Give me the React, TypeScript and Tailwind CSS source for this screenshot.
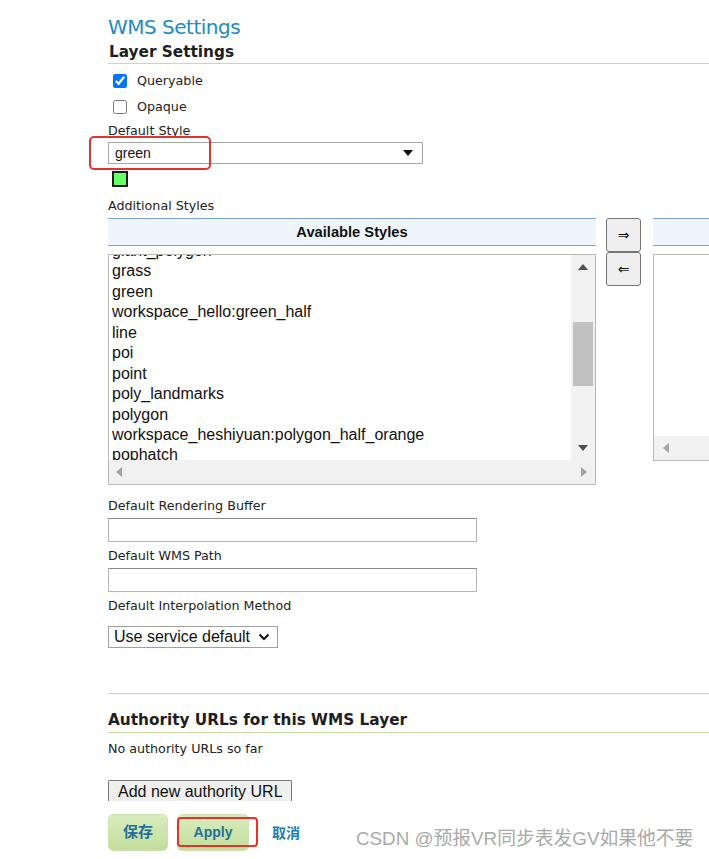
import React from "react";

const items = [
  "giant_polygon",
  "grass",
  "green",
  "workspace_hello:green_half",
  "line",
  "poi",
  "point",
  "poly_landmarks",
  "polygon",
  "workspace_heshiyuan:polygon_half_orange",
  "pophatch",
  "population",
];

function TriUp({ color = "#505050" }: { color?: string }) {
  return (
    <svg width="10" height="6" viewBox="0 0 10 6">
      <path d="M0 6 L5 0 L10 6 Z" fill={color} />
    </svg>
  );
}
function TriDown({ color = "#505050" }: { color?: string }) {
  return (
    <svg width="10" height="6" viewBox="0 0 10 6">
      <path d="M0 0 L10 0 L5 6 Z" fill={color} />
    </svg>
  );
}
function TriLeft({ color = "#a3a3a3" }: { color?: string }) {
  return (
    <svg width="6" height="10" viewBox="0 0 6 10">
      <path d="M6 0 L6 10 L0 5 Z" fill={color} />
    </svg>
  );
}
function TriRight({ color = "#a3a3a3" }: { color?: string }) {
  return (
    <svg width="6" height="10" viewBox="0 0 6 10">
      <path d="M0 0 L6 5 L0 10 Z" fill={color} />
    </svg>
  );
}

export default function App() {
  return (
    <div className="relative w-[709px] h-[859px] overflow-hidden bg-white text-[#222] font-['DejaVu_Sans',sans-serif] text-[12.7px]">
      <div className="pl-[108px] pt-[14px]">
        <h1 className="h-[28px] leading-[27px] text-[20px] tracking-[-0.5px] text-[#1d8bc5]">WMS Settings</h1>
        <h2 className="h-[22px] leading-[20px] pl-px text-[15.3px] font-bold text-[#1e1e1e] border-b border-[#c4de9f]">
          Layer Settings
        </h2>

        <div className="mt-[4px] flex items-center h-[26px] pl-[5px] gap-[10px]">
          <input type="checkbox" defaultChecked className="m-0 w-[14px] h-[14px]" />
          <span>Queryable</span>
        </div>
        <div className="flex items-center h-[26px] pl-[5px] gap-[10px]">
          <input type="checkbox" className="m-0 w-[14px] h-[14px]" />
          <span>Opaque</span>
        </div>

        <div className="mt-[3px] h-[16px] leading-[16px]">Default Style</div>
        <div className="mt-[3px] h-[22px] w-[315px] border border-[#a6a6a6] flex items-center justify-between pl-[6px] pr-[9px] font-['Liberation_Sans',sans-serif] text-[14px] text-[#111]">
          <span>green</span>
          <TriDown color="#111" />
        </div>
        <div className="mt-[7px] ml-[4px] w-[16px] h-[16px] border-2 border-[#1a1a1a] bg-[#66ff66]" />

        <div className="mt-[11px] h-[16px] leading-[16px]">Additional Styles</div>

        <div className="mt-[4px] flex items-start">
          {/* left column */}
          <div className="w-[488px] shrink-0">
            <div className="h-[28px] border-y border-[#7ca3d6] bg-[#eef5fd] flex items-center justify-center font-['Liberation_Sans',sans-serif] font-bold text-[14.7px] text-[#111]">
              Available Styles
            </div>
            <div className="mt-[8px] h-[231px] border border-[#b9b9b9] flex flex-col">
              <div className="flex-1 flex min-h-0">
                <div className="flex-1 overflow-hidden">
                  <div className="-mt-[14px] font-['Liberation_Sans',sans-serif] text-[16px] text-[#111]">
                    {items.map((it) => (
                      <div key={it} className="h-[20.44px] leading-[20.44px] pl-[3px] whitespace-nowrap">
                        {it}
                      </div>
                    ))}
                  </div>
                </div>
                <div className="w-[24px] bg-[#f1f1f1] flex flex-col">
                  <div className="h-[24px] flex items-center justify-center">
                    <TriUp />
                  </div>
                  <div className="flex-1 relative">
                    <div className="mt-[43px] mx-[2px] h-[64px] bg-[#c1c1c1]" />
                  </div>
                  <div className="h-[24px] flex items-center justify-center">
                    <TriDown />
                  </div>
                </div>
              </div>
              <div className="h-[24px] bg-[#f1f1f1] flex items-center justify-between pl-[7px] pr-[8px]">
                <TriLeft />
                <TriRight />
              </div>
            </div>
          </div>

          {/* middle buttons */}
          <div className="ml-[10px] shrink-0 flex flex-col">
            <button className="w-[35px] h-[34px] border border-[#767676] rounded-[3px] bg-[#efefef] text-[14px] text-[#111] flex items-center justify-center">
              ⇒
            </button>
            <button className="w-[35px] h-[34px] border border-[#767676] rounded-[3px] bg-[#efefef] text-[14px] text-[#111] flex items-center justify-center">
              ⇐
            </button>
          </div>

          {/* right column */}
          <div className="ml-[12px] w-[200px] shrink-0">
            <div className="h-[28px] border-y border-[#7ca3d6] bg-[#eef5fd]" />
            <div className="mt-[8px] h-[207px] border border-[#b9b9b9] flex flex-col">
              <div className="flex-1" />
              <div className="h-[24px] bg-[#f1f1f1] flex items-center pl-[9px]">
                <TriLeft />
              </div>
            </div>
          </div>
        </div>

        <div className="mt-[13px] h-[16px] leading-[16px]">Default Rendering Buffer</div>
        <div className="mt-[4px] h-[24px] w-[369px] border border-[#b5b5b5] border-t-[#8a8a8a]" />
        <div className="mt-[6px] h-[16px] leading-[16px]">Default WMS Path</div>
        <div className="mt-[4px] h-[24px] w-[369px] border border-[#b5b5b5] border-t-[#8a8a8a]" />
        <div className="mt-[6px] h-[16px] leading-[16px]">Default Interpolation Method</div>
        <div className="mt-[12px] h-[22px] w-[170px] border border-[#a0a0a0] flex items-center justify-between pl-[5px] pr-[7px] font-['Liberation_Sans',sans-serif] text-[16px] text-[#111]">
          <span>Use service default</span>
          <svg width="12" height="8" viewBox="0 0 12 8">
            <path d="M1.5 1.5 L6 6 L10.5 1.5" fill="none" stroke="#111" strokeWidth="2" />
          </svg>
        </div>

        <div className="mt-[45px] h-px bg-[#c4de9f]" />
        <h2 className="mt-[16px] h-[23px] leading-[21px] text-[15.3px] font-bold text-[#1e1e1e] border-b border-[#c4de9f]">
          Authority URLs for this WMS Layer
        </h2>
        <div className="mt-[7px] h-[16px] leading-[17px]">No authority URLs so far</div>
        <div className="mt-[24px] h-[21px] w-[184px] border border-b-0 border-[#767676] rounded-t-[2px] bg-[#efefef] pl-[9px] leading-[22px] font-['Liberation_Sans',sans-serif] text-[16px] text-[#111]">
          Add new authority URL
        </div>

        <div className="mt-[13px] flex items-center">
          <button className="w-[60px] h-[37px] rounded-[5px] border border-[#cfe3b2] bg-linear-to-b from-[#d8ecbd] to-[#c3de9b] font-['Liberation_Sans','Noto_Sans_CJK_SC',sans-serif] font-bold text-[15px] text-[#22709f]">
            保存
          </button>
          <button className="ml-[9px] w-[72px] h-[37px] rounded-[5px] border border-[#cfe3b2] bg-linear-to-b from-[#d8ecbd] to-[#c3de9b] font-['Liberation_Sans',sans-serif] font-bold text-[14px] text-[#22709f]">
            Apply
          </button>
          <span className="ml-[23px] font-['Noto_Sans_CJK_SC',sans-serif] font-bold text-[14px] text-[#1f7cba]">取消</span>
        </div>
      </div>

      {/* annotations */}
      <div className="absolute left-[89px] top-[136px] w-[122px] h-[34px] border-2 border-[#e5322b] rounded-[5px]" />
      <div className="absolute left-[177px] top-[817px] w-[81px] h-[30px] border-2 border-[#e5322b] rounded-[4px]" />

      {/* watermark */}
      <div className="absolute left-[356px] top-[827px] leading-[24px] text-[18.8px] text-[#a9a9a9] whitespace-nowrap font-['Liberation_Sans','Noto_Sans_CJK_SC',sans-serif]">
        CSDN @预报VR同步表发GV如果他不要
      </div>
    </div>
  );
}
